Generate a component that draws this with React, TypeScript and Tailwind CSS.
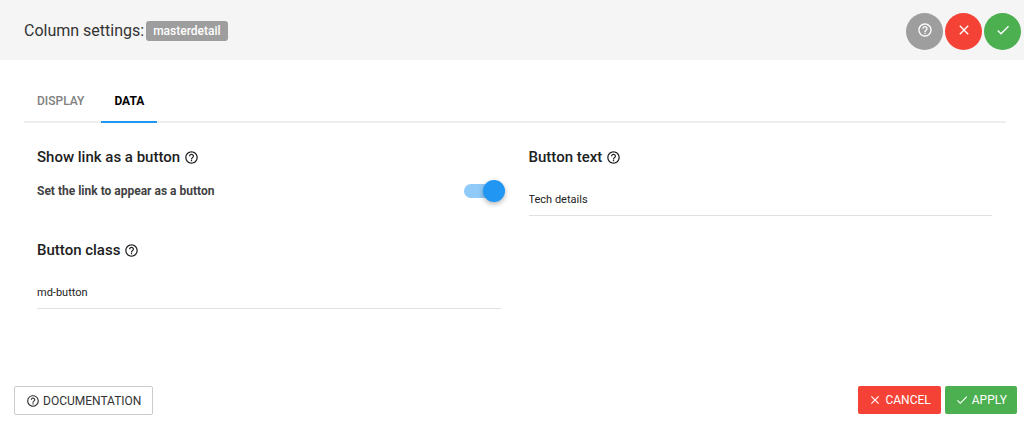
import React, { useState } from 'react';
import { MdCheck, MdClose, MdHelpOutline } from 'react-icons/md';

interface SectionTitleProps {
  htmlFor: string;
  children: React.ReactNode;
}

const SectionTitle: React.FC<SectionTitleProps> = ({ htmlFor, children }) => (
  <div className="flex items-center gap-1 h-6 text-[#212121]">
    <label htmlFor={htmlFor} className="text-[15px] leading-6 font-medium">{children}</label>
    <button type="button" aria-label="Help">
      <MdHelpOutline size={15} />
    </button>
  </div>
);

interface TextFieldProps {
  id: string;
  label: string;
  value: string;
  onChange: (value: string) => void;
}

const TextField: React.FC<TextFieldProps> = ({ id, label, value, onChange }) => (
  <div>
    <SectionTitle htmlFor={id}>{label}</SectionTitle>
    <input
      id={id}
      type="text"
      value={value}
      onChange={e => onChange(e.target.value)}
      className="block w-full mt-[15px] h-8 border-b border-[#e0e0e0] text-[11px] text-[#212121] outline-none"
    />
  </div>
);

const TABS = ['Display', 'Data'];

export default function App() {
  const [tab, setTab] = useState('Data');
  const [asButton, setAsButton] = useState(true);
  const [buttonText, setButtonText] = useState('Tech details');
  const [buttonClass, setButtonClass] = useState('md-button');

  return (
    <div className="min-h-screen flex flex-col bg-white font-['Roboto',sans-serif] text-[#212121]">
      {/* Header */}
      <header className="h-[60px] pt-0.5 pl-6 pr-[3px] flex items-center justify-between bg-[#f5f5f5]">
        <h1 className="flex items-center gap-0.5 text-base text-[#333333]">
          Column settings:
          <span className="h-5 px-[7px] rounded-[3px] bg-[#9e9e9e] text-white text-xs leading-5 font-medium">masterdetail</span>
        </h1>
        <div className="flex gap-0.5">
          <button type="button" aria-label="Help" className="size-[37px] pb-0.5 rounded-full bg-[#9e9e9e] text-white flex items-center justify-center">
            <MdHelpOutline size={16} />
          </button>
          <button type="button" aria-label="Cancel" className="size-[37px] pb-0.5 rounded-full bg-[#f44336] text-white flex items-center justify-center">
            <MdClose size={16} />
          </button>
          <button type="button" aria-label="Apply" className="size-[37px] pb-0.5 rounded-full bg-[#4caf50] text-white flex items-center justify-center">
            <MdCheck size={16} />
          </button>
        </div>
      </header>

      <main className="flex-1 pl-6 pr-[18px] pt-5">
        {/* Tabs */}
        <div role="tablist" className="flex gap-1 border-b-2 border-[#eeeeee]">
          {TABS.map(name => (
            <button
              key={name}
              type="button"
              role="tab"
              aria-selected={tab === name}
              onClick={() => setTab(name)}
              className={`h-[43px] -mb-0.5 px-[13px] border-b-2 text-xs uppercase ${
                tab === name ? 'border-[#2196f3] text-black font-bold' : 'border-transparent text-[#808080] font-medium'
              }`}
            >
              {name}
            </button>
          ))}
        </div>

        {/* Settings */}
        <div className="grid grid-cols-2 gap-x-7 gap-y-[22px] pl-[13px] pr-3.5 pt-[22px]">
          <div>
            <SectionTitle htmlFor="as-button">Show link as a button</SectionTitle>
            <div className="flex items-center justify-between mt-[11px]">
              <label htmlFor="as-button" className="text-xs font-bold text-[#424242]">Set the link to appear as a button</label>
              <input
                id="as-button"
                type="checkbox"
                role="switch"
                checked={asButton}
                onChange={e => setAsButton(e.target.checked)}
                className="appearance-none relative -mr-1 w-[41px] h-[22px] before:absolute before:left-0 before:top-1 before:w-[34px] before:h-3.5 before:rounded-full before:bg-[#bdbdbd] checked:before:bg-[#90caf9] after:absolute after:left-0 after:top-0 after:size-[22px] after:rounded-full after:bg-white checked:after:left-auto checked:after:right-0 checked:after:bg-[#2196f3] after:shadow-[0_2px_5px_rgba(0,0,0,0.3)]"
              />
            </div>
          </div>
          <TextField id="button-text" label="Button text" value={buttonText} onChange={setButtonText} />
          <TextField id="button-class" label="Button class" value={buttonClass} onChange={setButtonClass} />
        </div>
      </main>

      {/* Footer */}
      <footer className="flex items-start justify-between pl-3.5 pr-[7px] pb-5 text-xs">
        <button type="button" className="h-[29px] px-[11px] flex items-center gap-[3px] rounded-xs border border-[#cccccc] text-[#333333] uppercase">
          <MdHelpOutline size={14} />
          Documentation
        </button>
        <div className="flex gap-1 text-white">
          <button type="button" className="h-7 px-2.5 flex items-center gap-[3px] rounded-xs bg-[#f44336] uppercase">
            <MdClose size={14} />
            Cancel
          </button>
          <button type="button" className="h-7 px-2.5 flex items-center gap-[3px] rounded-xs bg-[#4caf50] uppercase">
            <MdCheck size={14} />
            Apply
          </button>
        </div>
      </footer>
    </div>
  );
}
